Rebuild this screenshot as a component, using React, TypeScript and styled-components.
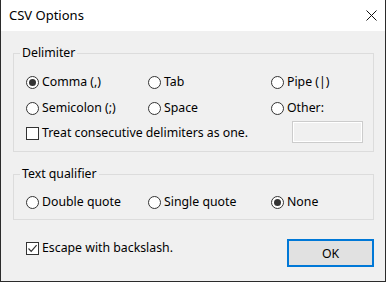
import React from "react";
import styled, { createGlobalStyle } from "styled-components";

const GlobalStyle = createGlobalStyle`
  html, body {
    margin: 0;
    padding: 0;
    background: #ffffff;
  }
  body {
    font-family: "Noto Sans", "Segoe UI", Arial, sans-serif;
    font-size: 12.3px;
    color: #000000;
  }
`;

const delimiters = [
  { label: "Comma (,)", checked: true },
  { label: "Tab", checked: false },
  { label: "Pipe (|)", checked: false },
  { label: "Semicolon (;)", checked: false },
  { label: "Space", checked: false },
  { label: "Other:", checked: false },
];

const qualifiers = [
  { label: "Double quote", checked: false },
  { label: "Single quote", checked: false },
  { label: "None", checked: true },
];

const Radio = ({ label, checked }: { label: string; checked: boolean }) => (
  <Choice>
    <RadioCircle>{checked && <RadioDot />}</RadioCircle>
    <ChoiceText>{label}</ChoiceText>
  </Choice>
);

const Checkbox = ({ label, checked }: { label: string; checked: boolean }) => (
  <Choice>
    <CheckBox>
      {checked && (
        <svg width="11" height="11" viewBox="0 0 11 11">
          <path d="M1.5 5.5 L4.2 8.3 L9.6 2.2" fill="none" stroke="#333" strokeWidth="1.2" />
        </svg>
      )}
    </CheckBox>
    <ChoiceText>{label}</ChoiceText>
  </Choice>
);

const App = () => {
  return (
    <>
      <GlobalStyle />
      <Window>
        <TitleBar>
          <Title>CSV Options</Title>
          <CloseButton>
            <svg width="11" height="11" viewBox="0 0 11 11">
              <path d="M0.5 0.5 L10.5 10.5 M10.5 0.5 L0.5 10.5" stroke="#111" strokeWidth="1" />
            </svg>
          </CloseButton>
        </TitleBar>
        <Body>
          <Group>
            <Legend>Delimiter</Legend>
            <DelimiterGrid>
              {delimiters.map((d) => (
                <Radio key={d.label} label={d.label} checked={d.checked} />
              ))}
              <Wide>
                <Checkbox label="Treat consecutive delimiters as one." checked={false} />
              </Wide>
              <OtherInput />
            </DelimiterGrid>
          </Group>
          <Group $spaced>
            <Legend>Text qualifier</Legend>
            <QualifierRow>
              {qualifiers.map((q) => (
                <Radio key={q.label} label={q.label} checked={q.checked} />
              ))}
            </QualifierRow>
          </Group>
          <Footer>
            <EscapeOption>
              <Checkbox label="Escape with backslash." checked />
            </EscapeOption>
            <OkButton>OK</OkButton>
          </Footer>
        </Body>
      </Window>
    </>
  );
};

export default App;

const Window = styled.div`
  width: 386px;
  height: 282px;
  box-sizing: border-box;
  border: 1px solid #2b2b2b;
  border-top: none;
  background: #f0f0f0;
  display: flex;
  flex-direction: column;
`;

const TitleBar = styled.div`
  height: 31px;
  flex-shrink: 0;
  background: #ffffff;
  display: flex;
  align-items: center;
  justify-content: space-between;
  padding: 0 8px 0 8px;
`;

const Title = styled.span`
  font-size: 13px;
  color: #000;
  margin-top: -1px;
`;

const CloseButton = styled.span`
  display: flex;
  width: 11px;
  height: 11px;
  margin-top: -1px;
`;

const Body = styled.div`
  flex: 1;
  display: flex;
  flex-direction: column;
  padding: 14px 11px 0 12px;
`;

const Group = styled.fieldset<{ $spaced?: boolean }>`
  margin: ${(p) => (p.$spaced ? "14px" : "0")} 0 0 0;
  padding: 10px 10px 7px 12px;
  border: 1px solid #dcdcdc;
  min-width: 0;
`;

const Legend = styled.legend`
  margin-left: -6px;
  padding: 0 2px;
  line-height: 16px;
`;

const DelimiterGrid = styled.div`
  display: grid;
  grid-template-columns: 122px 123px 1fr;
  grid-auto-rows: 20px;
  row-gap: 6px;
  padding-top: 1px;
`;

const QualifierRow = styled.div`
  display: grid;
  grid-template-columns: 122px 123px 1fr;
  height: 20px;
`;

const Choice = styled.div`
  display: flex;
  align-items: center;
  gap: 3px;
  height: 20px;
  white-space: nowrap;
`;

const ChoiceText = styled.span`
  line-height: 16px;
`;

const RadioCircle = styled.span`
  width: 13px;
  height: 13px;
  box-sizing: border-box;
  border: 1px solid #333333;
  border-radius: 50%;
  background: #ffffff;
  display: flex;
  align-items: center;
  justify-content: center;
  flex-shrink: 0;
`;

const RadioDot = styled.span`
  width: 7px;
  height: 7px;
  border-radius: 50%;
  background: #333333;
`;

const CheckBox = styled.span`
  width: 13px;
  height: 13px;
  box-sizing: border-box;
  border: 1px solid #333333;
  background: #ffffff;
  display: flex;
  align-items: center;
  justify-content: center;
  flex-shrink: 0;
`;

const Wide = styled.div`
  grid-column: 1 / span 2;
  margin-top: -1px;
`;

const OtherInput = styled.div`
  width: 71px;
  height: 22px;
  box-sizing: border-box;
  margin: -3px 0 0 21px;
  border: 1px solid #cccccc;
  box-shadow: inset 0 0 0 1px #ffffff;
  background: #f0f0f0;
`;

const Footer = styled.div`
  display: flex;
  justify-content: space-between;
  align-items: flex-start;
  margin-top: 18px;
`;

const EscapeOption = styled.div`
  margin-left: 13px;
`;

const OkButton = styled.div`
  width: 87px;
  height: 28px;
  box-sizing: border-box;
  margin-top: 1px;
  border: 2px solid #0078d7;
  background: #e1e1e1;
  display: flex;
  align-items: center;
  justify-content: center;
`;
